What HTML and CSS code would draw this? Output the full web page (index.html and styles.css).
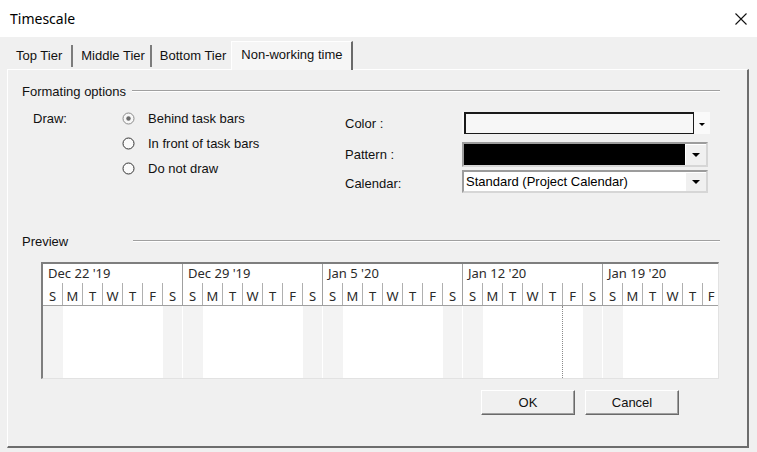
FILE: index.html
```html
<!DOCTYPE html>
<html lang="en">
<head>
    <meta charset="UTF-8">
    <title>Timescale</title>
    <link rel="stylesheet" href="styles.css">
</head>
<body>
    <div class="titlebar">
        <span class="title">Timescale</span>
        <svg class="close" width="12" height="12" viewBox="0 0 12 12">
            <path d="M0.5 0.5 L11.5 11.5 M11.5 0.5 L0.5 11.5" stroke="#111" stroke-width="1.1" fill="none"/>
        </svg>
    </div>

    <div class="tabs">
        <div class="tab">Top Tier</div>
        <div class="tab">Middle Tier</div>
        <div class="tab plain">Bottom Tier</div>
        <div class="tab active">Non-working time</div>
    </div>

    <div class="panel">
        <div class="group-head">
            <span class="label">Formating options</span>
            <span class="line"></span>
        </div>

        <div class="options">
            <div class="draw-label">Draw:</div>
            <div class="radios">
                <div class="radio">
                    <svg width="13" height="13" viewBox="0 0 13 13">
                        <circle cx="6.5" cy="6.5" r="5.5" fill="#f7f7f7" stroke="#8a8a8a"/>
                        <circle cx="6.5" cy="6.5" r="2.2" fill="#6a6a6a"/>
                    </svg>
                    <span>Behind task bars</span>
                </div>
                <div class="radio">
                    <svg width="13" height="13" viewBox="0 0 13 13">
                        <circle cx="6.5" cy="6.5" r="5.5" fill="#fafafa" stroke="#333"/>
                    </svg>
                    <span>In front of task bars</span>
                </div>
                <div class="radio">
                    <svg width="13" height="13" viewBox="0 0 13 13">
                        <circle cx="6.5" cy="6.5" r="5.5" fill="#fafafa" stroke="#333"/>
                    </svg>
                    <span>Do not draw</span>
                </div>
            </div>
            <div class="fields">
                <div class="field-label h22">Color :</div>
                <div class="combo-color">
                    <span class="swatch"></span>
                    <span class="caret small"></span>
                </div>
                <div class="field-label h25">Pattern :</div>
                <div class="combo">
                    <span class="value black"></span>
                    <span class="drop"><span class="caret"></span></span>
                </div>
                <div class="field-label h27">Calendar:</div>
                <div class="combo short">
                    <span class="value">Standard (Project Calendar)</span>
                    <span class="drop"><span class="caret"></span></span>
                </div>
            </div>
        </div>

        <div class="group-head preview-head">
            <span class="label">Preview</span>
            <span class="line"></span>
        </div>

        <div class="timeline">
            <div class="week">
                <div class="week-date">Dec 22 '19</div>
                <div class="days"><span>S</span><span>M</span><span>T</span><span>W</span><span>T</span><span>F</span><span>S</span></div>
                <div class="cells"><i class="off"></i><i></i><i></i><i></i><i></i><i></i><i class="off"></i></div>
            </div>
            <div class="week">
                <div class="week-date">Dec 29 '19</div>
                <div class="days"><span>S</span><span>M</span><span>T</span><span>W</span><span>T</span><span>F</span><span>S</span></div>
                <div class="cells"><i class="off"></i><i></i><i></i><i></i><i></i><i></i><i class="off"></i></div>
            </div>
            <div class="week">
                <div class="week-date">Jan 5 '20</div>
                <div class="days"><span>S</span><span>M</span><span>T</span><span>W</span><span>T</span><span>F</span><span>S</span></div>
                <div class="cells"><i class="off"></i><i></i><i></i><i></i><i></i><i></i><i class="off"></i></div>
            </div>
            <div class="week">
                <div class="week-date">Jan 12 '20</div>
                <div class="days"><span>S</span><span>M</span><span>T</span><span>W</span><span>T</span><span>F</span><span>S</span></div>
                <div class="cells"><i class="off"></i><i></i><i></i><i></i><i class="today"></i><i></i><i class="off"></i></div>
            </div>
            <div class="week last">
                <div class="week-date">Jan 19 '20</div>
                <div class="days"><span>S</span><span>M</span><span>T</span><span>W</span><span>T</span><span>F</span></div>
                <div class="cells"><i class="off"></i><i></i><i></i><i></i><i></i><i></i></div>
            </div>
        </div>

        <div class="actions">
            <button class="btn">OK</button>
            <button class="btn">Cancel</button>
        </div>
    </div>
</body>
</html>
```

FILE: styles.css
```css
body { margin: 0; background: #f0f0f0; font-family: "Liberation Sans", Arial, sans-serif; font-size: 13px; color: #111; }

.titlebar { height: 37px; box-sizing: border-box; background: #fff; display: flex; align-items: center; justify-content: space-between; padding: 0 10px; }
.title { font-family: "Noto Sans", sans-serif; font-size: 14px; color: #000; }
.close { display: block; }

.tabs { height: 32px; box-sizing: border-box; display: flex; align-items: flex-end; padding-left: 7px; }
.tab { height: 22px; line-height: 22px; margin-bottom: 2px; padding: 0 5px 0 8px; border-right: 2px solid #7c7c7c; box-sizing: border-box; }
.tab:first-child { padding: 0 9px 0 9px; }
.tab.plain { border-right: none; }
.tab.active { position: relative; z-index: 1; height: 29px; line-height: 22px; padding: 2px 9px 0 9px; margin-bottom: -1px; background: #f6f6f6; border-top: 1px solid #fff; border-left: 1px solid #fff; border-right: 2px solid #6a6a6a; }

.panel { height: 379px; box-sizing: border-box; margin: 0 8px 0 7px; padding-top: 13px; border-top: 1px solid #fff; border-left: 1px solid #fff; border-right: 2px solid #6d6d6d; border-bottom: 2px solid #6d6d6d; }

.group-head { display: flex; align-items: center; gap: 6px; height: 16px; padding-left: 14px; margin-right: 27px; }
.group-head .line { flex: 1; border-top: 1px solid #a0a0a0; border-bottom: 1px solid #fff; }
.preview-head { margin-top: 40px; gap: 0; }
.preview-head .label { width: 111px; }

.options { display: flex; margin-top: 7px; padding-left: 25px; }
.draw-label { width: 89px; line-height: 25px; }
.radios { width: 223px; }
.radio { display: flex; align-items: center; gap: 13px; height: 25px; }
.radio svg { display: block; }

.fields { display: grid; grid-template-columns: 117px 248px; grid-template-rows: 30px 28px 23px; align-items: start; padding-top: 6px; }
.field-label.h22 { line-height: 23px; }
.field-label.h25 { line-height: 25px; }
.field-label.h27 { line-height: 27px; }

.combo-color { display: flex; align-items: center; height: 22px; background: #fafafa; }
.swatch { flex: 1; height: 22px; box-sizing: border-box; margin-left: 2px; background: #f7f7f7; border: 1px solid #1a1a1a; border-top-width: 2px; border-left-width: 2px; }
.caret { width: 0; height: 0; border-left: 4px solid transparent; border-right: 4px solid transparent; border-top: 4px solid #000; }
.caret.small { margin: 2px 5px 0 5px; border-left-width: 3px; border-right-width: 3px; border-top-width: 3px; }

.combo { display: flex; width: 246px; height: 25px; box-sizing: border-box; border: 2px solid; border-color: #9c9c9c #d6d6d6 #d6d6d6 #9c9c9c; background: #fff; }
.combo.short { height: 23px; }
.combo .value { flex: 1; padding-left: 2px; line-height: 19px; white-space: nowrap; color: #000; }
.combo .value.black { background: #000; }
.drop { width: 20px; display: flex; align-items: center; justify-content: center; background: #f0f0f0; border-left: 1px solid #fff; border-top: 1px solid #fff; }

.timeline { display: flex; overflow: hidden; width: 678px; height: 117px; box-sizing: border-box; margin: 13px 0 0 33px; background: #fff; border-top: 2px solid #7e7e7e; border-left: 2px solid #7e7e7e; border-right: 1px solid #e2e2e2; border-bottom: 1px solid #e2e2e2; font-family: "Noto Sans", sans-serif; font-size: 13px; color: #2a2a2a; }
.week { flex: 0 0 140px; }
.week.last { flex: 1 1 auto; min-width: 0; }
.week-date { height: 19px; line-height: 19px; padding-left: 5px; box-sizing: border-box; border-right: 1px solid #a0a0a0; white-space: nowrap; }
.week.last .week-date { border-right: none; }
.days { display: flex; height: 23px; box-sizing: border-box; border-bottom: 1px solid #a0a0a0; }
.days span { flex: 0 0 20px; box-sizing: border-box; border-right: 1px solid #b0b0b0; text-align: center; line-height: 18px; padding-top: 4px; }
.days span:last-child { border-right-color: #a0a0a0; }
.week.last .days span:last-child { border-right: none; flex-basis: 16px; }
.cells { display: flex; height: 72px; }
.cells i { flex: 0 0 20px; box-sizing: border-box; }
.cells i.off { background: #f3f3f3; }
.cells i:last-child { border-right: 1px solid #fff; }
.cells i.today { border-right: 1px dotted #8a8a8a; }

.actions { display: flex; justify-content: flex-end; gap: 10px; margin: 11px 68px 0 0; }
.btn { width: 94px; height: 25px; box-sizing: border-box; padding: 0; background: #f0f0f0; border: 1px solid; border-color: #fff #6a6a6a #6a6a6a #fff; box-shadow: inset -1px -1px #a0a0a0; font-family: "Liberation Sans", Arial, sans-serif; font-size: 13px; color: #111; }
```
